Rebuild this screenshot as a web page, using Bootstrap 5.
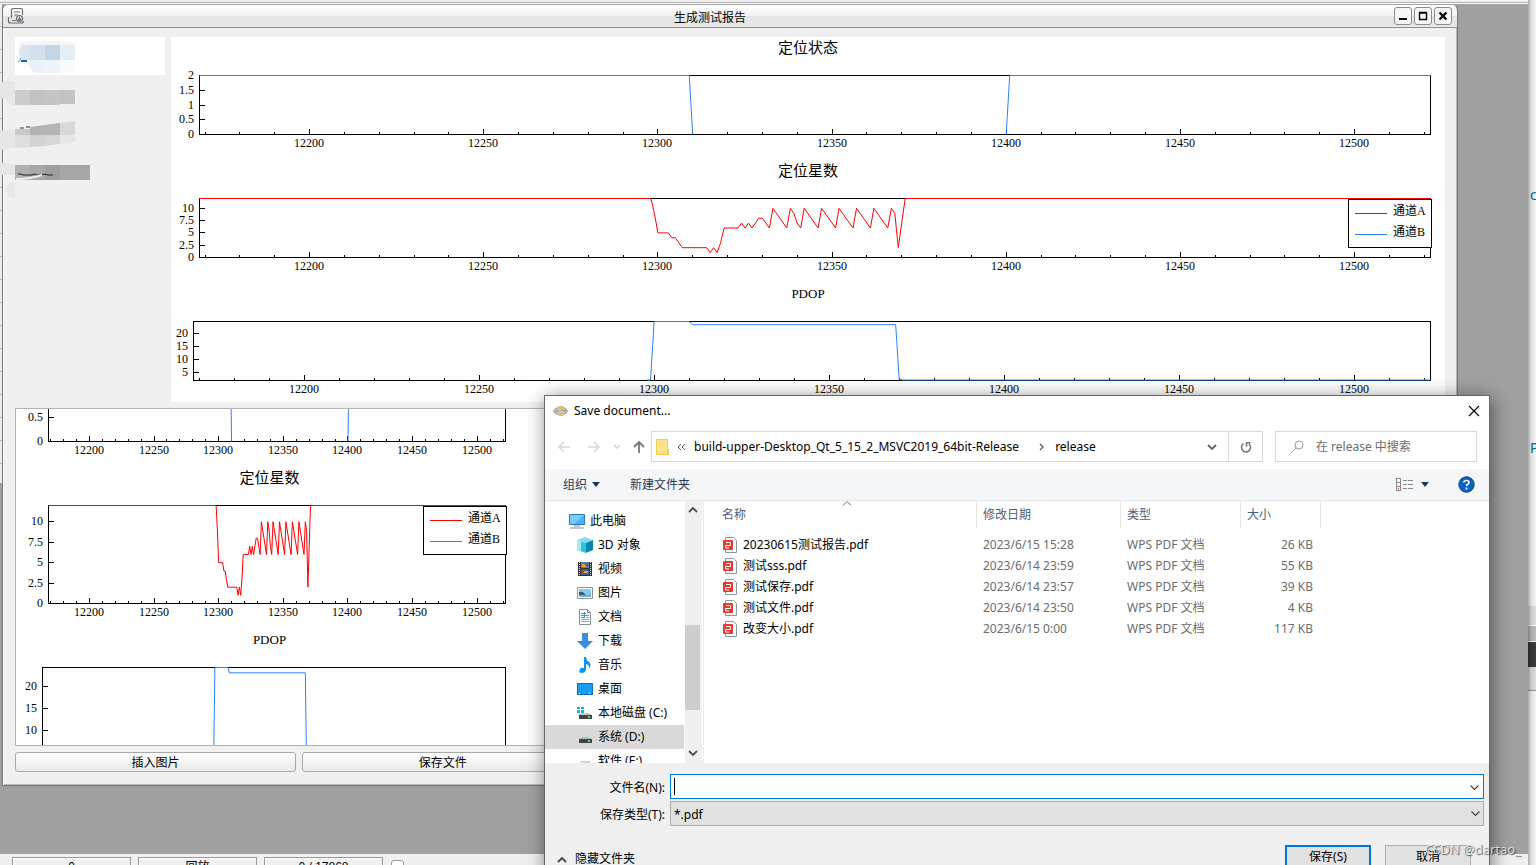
<!DOCTYPE html>
<html lang="zh-CN">
<head>
<meta charset="utf-8">
<meta name="viewport" content="width=device-width, initial-scale=1">
<title>生成测试报告</title>
<link href="https://cdn.jsdelivr.net/npm/bootstrap@5.3.0/dist/css/bootstrap.min.css" rel="stylesheet">
<style>
:root{--ui:"Noto Sans","Noto Sans CJK SC",sans-serif;--song:"Liberation Serif","Noto Sans CJK SC",serif}
body{font:12px/16px var(--ui);color:#000;background:#a0a0a0}
svg{display:block;flex:none}
button,input,select{font:inherit;color:inherit;padding:0;border-radius:0}
.top-strip{height:4px;background:linear-gradient(#efefef 2px,#b0b0b0 2px 3px,#fff 3px)}
.edge-left{width:2px;height:479px;background:repeating-linear-gradient(#ececec 0 22px,#b5b5b5 22px 23px)}
.edge-right{width:8px;background:#f6f6f6;color:#07728a;font-size:14px}
.edge-right::after{content:"";position:absolute;inset:0;background:linear-gradient(90deg,rgba(0,0,0,.32),rgba(0,0,0,.1) 3px,transparent)}
.edge-right .code,.edge-right .code2{left:2px}
.edge-right .code{top:187px}.edge-right .code2{top:440px}
.edge-right .blocks{top:606px;height:85px;background:linear-gradient(#dedede 19px,#fff 19px 20px,#bcbcbc 20px 35px,#fff 35px 36px,#3a3a3a 36px 61px,#dedede 61px 84px,#999 84px)}
.status-bar{height:11px;background:#f0f0f0;padding:3px 0 0 12px;gap:7px}
.status-bar button{width:119px;height:24px;border:1px solid #999;background:#f0f0f0;box-shadow:inset 1px 1px #fff;font:12px/16px "Liberation Sans","Noto Sans CJK SC",sans-serif;display:flex;justify-content:center;padding-top:1px}
.status-bar input{appearance:none;height:14px;background:linear-gradient(transparent 7px,#aaa 7px 8px,transparent 8px);margin:3px 0 0 1px}
.status-bar input::-webkit-slider-thumb{appearance:none;width:13px;height:14px;border:1px solid #999;border-radius:3px;background:#fff}

.main-win{left:2px;right:78px;top:0;bottom:68px;background:#f0f0f0;border:1px solid #777;border-top-color:#a5a5a5;border-radius:6px 6px 0 0;box-shadow:inset 1px 0 #fff,inset -1px -1px #bbb;font-family:var(--song)}
.win-title{height:23px;background:linear-gradient(#fff 0,#f3f3f3 48%,#e5e5e5 50%,#e8e8e8);border-bottom:1px solid #8e8e8e;border-radius:6px 6px 0 0;padding:0 5px 0 3px;font:12px/22px "Noto Sans CJK SC",sans-serif}
.win-title .caption{padding-top:2px}
.win-title .controls{gap:2px}
.win-title button{width:18px;height:18px;border:1px solid #8b8b8b;border-radius:3px;background:#f6f6f6;display:grid;place-items:center}
.win-body{padding:9px 12px 13px 12px;gap:6px;min-height:0}
.report-nav{width:150px}
.report-nav .list-group-item{height:38px;border:0;border-radius:0;background:transparent;padding:0}
.report-nav .list-group-item.active{background:#fff}
.plots{background:#fff;height:365px;min-width:0}
.preview{background:#fff;border:1px solid #b4b4b4;overflow:hidden;min-height:0}
.preview .paper{width:507px}
.plot-actions{display:grid;grid-template-columns:repeat(5,1fr);gap:6px}
.plot-actions button{height:20px;border:1px solid #a8a8a8;border-radius:3px;background:linear-gradient(#fefefe,#e9e9e9);line-height:16px;padding-top:2px}
.smudge{left:-3px;top:33px}
.plots svg,.paper svg{width:100%}
svg .ax{stroke:#000;fill:none;shape-rendering:crispEdges}
svg .box-fill{fill:#fff}
svg .tick-label{font:12px var(--song)}
svg .plot-title{font:15px var(--song)}
svg .plot-title.latin{font-size:13px}

.save-dlg{left:544px;right:46px;top:395px;bottom:-17px;background:#fff;border:1px solid #666;box-shadow:2px 3px 18px rgba(0,0,0,.5);z-index:5}
.dlg-title,.address-row,.cmd-bar,.dlg-foot{flex-shrink:0}
.dlg-title{height:30px;padding:0 9px 0 8px;gap:5px}
.address-row{height:43px;padding:5px 12px 7px 12px}
.address-row>div,.search-box{border:1px solid #d9d9d9}
.icon-btn{border:0;background:transparent;display:grid;place-items:center}
.address-row .icon-btn.go{width:16px}
.address-row .icon-btn.up{margin:0 6px 0 8px}
.search-box{width:202px;padding-left:14px;gap:12px;margin-left:12px}
.search-box input,.name-box input{border:0;outline:0;min-width:0;background:transparent}
.search-box input::placeholder{color:#6d6d6d;opacity:1}
.refresh{width:34px;border-left:1px solid #d9d9d9!important}
.crumb-sep{margin:0 9px 0 18px}
.cmd-bar{height:32px;background:#f5f6f7;border-bottom:1px solid #e6e6e8;padding:0 14px 0 18px;gap:29px;color:#1e395b}
.cmd-bar button{border:0;background:transparent}
.files{min-height:0}
.tree{width:139px;padding-top:8px;overflow:hidden}
.tree a{height:24px;gap:5px;padding-left:32px;color:#000;text-decoration:none;white-space:nowrap;flex:none}
.tree a.root{padding-left:24px}
.tree a.current{background:#d9d9d9}
.tree-scroll{width:17px;background:#f0f0f0;margin-left:1px}
.tree-scroll .track{height:100%;padding:5px 3px}
.tree-scroll .thumb{width:15px;height:85px;top:124px;left:0;background:#cdcdcd}
.listing{border-left:1px solid #ececec;margin-left:1px}
.file-table{table-layout:fixed;width:617px;margin:0;border-collapse:separate;border-spacing:0}
.file-table th{font-weight:400;color:#4c607a;height:27px;border-right:1px solid #e5e5e5;padding:0 6px;vertical-align:middle}
.file-table th:first-child{padding-left:18px}
.file-table td{height:21px;padding:0 6px;color:#6d6d6d;white-space:nowrap;vertical-align:middle}
.file-table td:first-child{color:#000;padding-left:18px}
.file-table td:last-child{text-align:right;padding-right:8px}
.file-table .file-name{gap:5px}
.file-table tbody::before{content:"";display:block;height:6px}
.sort{left:137px;top:0}
.dlg-foot{background:#f0f0f0;padding:11px 5px 12px 0}
.field-row{height:25px;margin-bottom:2px}
.field-row label{width:120px;text-align:right;margin-right:5px;padding-top:2px}
.name-box{border:1px solid #0078d7;background:#fff;padding:0 4px}
.caret{left:3px;top:3px;width:1px;height:17px;background:#000}
.type-box select{appearance:none;border:1px solid #adadad;background:#e1e1e1;padding:2px 3px 0;outline:0}
.drop{right:4px;top:10px;pointer-events:none}
.foot-actions{margin-top:19px;padding:0 13px 0 12px;gap:14px}
.foot-actions .choice{width:86px;height:24px;background:#e1e1e1;border:1px solid #adadad}
.foot-actions .choice.primary{border:2px solid #0078d7}
.watermark{right:15px;bottom:7px;font-size:13px;line-height:18px;color:rgba(235,235,235,.85);text-shadow:1px 1px 1px rgba(0,0,0,.6);z-index:9}
</style>
</head>
<body class="vh-100 overflow-hidden position-relative d-flex flex-column">
<div class="top-strip"></div>
<div class="flex-grow-1 position-relative">
  <div class="edge-left"></div>
  <main class="main-win position-absolute d-flex flex-column">
    <header class="win-title d-flex align-items-center">
      <svg width="20" height="20" fill="none" stroke="#6a6a78" stroke-width="1.200"><path d="M5.500 12V4q0-1.500 1.500-1.500h8q1.500 0 1.500 1.500v5M8 6h6M8 9h4M2.500 11v4q0 2 2 2h11q2 0 2-2"/><circle cx="13.500" cy="12.500" r="3"/><path d="M13.500 10.500v4m-1.500-1.500l1.500 1.500 1.500-1.500M6 14.500h4"/></svg>
      <span class="caption flex-grow-1 text-center">生成测试报告</span>
      <div class="controls d-flex">
        <button aria-label="最小化"><svg width="10" height="10"><path d="M1 8h8" stroke="#000" stroke-width="2"/></svg></button>
        <button aria-label="最大化"><svg width="10" height="10"><path d="M1.500 1.500h7v7h-7zM1 2h8" stroke="#000" fill="none" stroke-width="1.400"/></svg></button>
        <button aria-label="关闭"><svg width="10" height="10"><path d="M1.500 1.500l7 7m0-7l-7 7" stroke="#000" stroke-width="2.200"/></svg></button>
      </div>
    </header>
    <div class="win-body flex-grow-1 d-flex flex-column position-relative">
      <div class="d-flex" style="gap:6px">
        <nav class="report-nav list-group flex-shrink-0" aria-label="报告项目">
          <a href="#" class="list-group-item active" aria-label="项目一"><svg width="66" height="36">
            <path d="M3 25q2-1 3-4M8 22q1 3 4 3" stroke="#3b82b8" fill="none"/><path d="M4 8Q6 4 16 4H50L64 7H60V8z" fill="#f3f5f6"/>
            <path d="M15 8V23H8Q3 19 4 12L7 8z" fill="#d9e6f1"/><path d="M15 8h15v15H15z" fill="#d3e0ec"/><path d="M30 8h15v15H30z" fill="#c3d6e6"/><path d="M45 8h15v15H45z" fill="#e4eef7"/>
            <path d="M12 23h18v13H22Q14 35 12 23z" fill="#eaf2f9"/><path d="M30 23h15v13H30z" fill="#eef3f9"/><path d="M45 23h15v11l-15 2z" fill="#f8fbfd"/><path d="M6 24h6" stroke="#1c68a8" stroke-width="2"/></svg></a>
          <a href="#" class="list-group-item" aria-label="项目二"></a>
          <a href="#" class="list-group-item" aria-label="项目三"></a>
          <a href="#" class="list-group-item" aria-label="项目四"></a>
        </nav>
        <section class="plots flex-grow-1" id="plots"></section>
      </div>
      <section class="preview flex-grow-1" id="preview"><div class="paper" id="paper"></div></section>
      <div class="plot-actions"><button>插入图片</button><button>保存文件</button></div>
    </div>
    <svg class="smudge position-absolute" width="92" height="170">
      <g transform="translate(0,-38)">
      <path d="M0 84q6-6 15-2v24q-8-2-10-7l-5-1z" fill="#e6e6e6"/>
      <path d="M15 90h15v15H15z" fill="#cecccb"/><path d="M30 90h15v15H30z" fill="#c1c3c2"/><path d="M45 90h15v15H45z" fill="#c7c5c4"/><path d="M60 90h15v14H60z" fill="#c2c3c5"/>
      <path d="M20 128h4m2-1h4" stroke="#333"/>
      <path d="M0 131l15-2v19L0 150z" fill="#e6e6e6"/><path d="M15 129h15v6H15z" fill="#c9c9c9"/><path d="M30 127l15-2v10H30z" fill="#b3b3b3"/><path d="M45 125l15-2v12H45z" fill="#b5b4b3"/><path d="M60 123l15-2v14H60z" fill="#d7d8da"/>
      <path d="M15 135h15v12l-15 1z" fill="#dedede"/><path d="M30 135h15v11l-15 1z" fill="#d3d3d3"/><path d="M45 135h15v9l-15 2z" fill="#d7d7d5"/><path d="M60 135h15v7l-15 2z" fill="#e5e6e8"/>
      <path d="M0 163h8l7 2v10H0z" fill="#e6e6e6"/><path d="M15 165h15v15H15z" fill="#b0b0b0"/><path d="M30 165h15v15H30z" fill="#a8a8a8"/><path d="M45 165h15v15H45z" fill="#9f9f9f"/><path d="M60 165h30v15H60z" fill="#a5a6a7"/>
      <path d="M18 174h3l2 1h9l2-1 3 1h5l3-1 3 1h5" stroke="#222" fill="none"/><path d="M16 179q14 0 26-4" stroke="#eee" stroke-width="2" fill="none"/>
      <path d="M15 180v19q-9-3-10-10q2-7 10-9z" fill="#e8e8e8"/></g>
    </svg>
  </main>
</div>
<footer class="status-bar d-flex overflow-hidden">
  <button>0</button><button>回放</button><button>0 / 17868</button>
  <input type="range" class="flex-grow-1" value="0" aria-label="进度">
</footer>
<aside class="edge-right position-absolute top-0 end-0 h-100 overflow-hidden">
  <span class="code position-absolute">c</span><span class="code2 position-absolute">P</span>
  <div class="blocks position-absolute w-100"></div>
</aside>

<section class="save-dlg position-absolute d-flex flex-column" role="dialog" aria-labelledby="dlgTitle">
  <div class="dlg-title d-flex align-items-center">
    <svg width="16" height="16"><ellipse cx="7.500" cy="8" rx="7" ry="3.600" fill="#d9c6b0" stroke="#b98d72" stroke-width=".8"/><circle cx="8" cy="8" r="4.600" fill="#b9cbe4" stroke="#9b9a9a" stroke-width=".7"/><path d="M5 4l4-1 1 3-3 1zM6 11l4-1 1 2-3 1z" fill="#e8c440"/><path d="M8 7l5 1M2 9l4-2" stroke="#d28b36"/></svg>
    <span id="dlgTitle" class="flex-grow-1">Save document...</span>
    <button class="icon-btn" aria-label="关闭"><svg width="12" height="12"><path d="M1 1l10 10m0-10L1 11" stroke="#000" stroke-width="1.100"/></svg></button>
  </div>
  <div class="address-row d-flex">
    <button class="icon-btn" aria-label="后退"><svg width="14" height="12" fill="none" stroke="#d8d8d8" stroke-width="1.600"><path d="M13 6H2m5-5L2 6l5 5"/></svg></button>
    <button class="icon-btn ms-3" aria-label="前进"><svg width="14" height="12" fill="none" stroke="#d8d8d8" stroke-width="1.600"><path d="M1 6h11M7 1l5 5-5 5"/></svg></button>
    <button class="icon-btn go ms-2" aria-label="最近位置"><svg width="8" height="6" fill="none" stroke="#d0d0d0" stroke-width="1.400"><path d="M1 1l3 3 3-3"/></svg></button>
    <button class="icon-btn up" aria-label="上移"><svg width="12" height="14" fill="none" stroke="#777" stroke-width="1.800"><path d="M6 13V2M1 7l5-5 5 5"/></svg></button>
    <div class="d-flex flex-grow-1 align-items-stretch">
      <div class="d-flex align-items-center flex-grow-1 ps-1">
        <svg width="13" height="16"><path d="M0 0h12v10h1v6H0z" fill="#f2cc56"/><path d="M1 1h10v14H1z" fill="#ffe48c"/></svg>
        <svg class="ms-2" width="9" height="8" fill="none" stroke="#555"><path d="M4 1L1 4l3 3M8 1L5 4l3 3"/></svg>
        <span class="ms-2">build-upper-Desktop_Qt_5_15_2_MSVC2019_64bit-Release</span>
        <svg class="crumb-sep" width="9" height="8" fill="none" stroke="#666" stroke-width="1.400"><path d="M3 1l3 3-3 3"/></svg>
        <span>release</span>
      </div>
      <button class="icon-btn pe-2" aria-label="展开"><svg width="16" height="8" fill="none" stroke="#666" stroke-width="1.800"><path d="M4 2l4 4 4-4"/></svg></button>
      <button class="icon-btn refresh" aria-label="刷新"><svg width="12" height="12" fill="none" stroke="#777" stroke-width="1.600"><path d="M3.500 2.700a4.500 4.500 0 1 0 5.500.3M10.500 1.800h-4v4"/></svg></button>
    </div>
    <label class="search-box d-flex align-items-center">
      <svg width="14" height="14" fill="none" stroke="#999"><circle cx="9" cy="5" r="4"/><path d="M6 8l-5 5"/></svg>
      <input class="flex-grow-1" aria-label="搜索" placeholder="在 release 中搜索">
    </label>
  </div>
  <div class="cmd-bar d-flex align-items-center">
    <button class="d-flex align-items-center gap-1">组织<svg width="10" height="5"><path d="M1 0h8L5 5z" fill="#1e395b"/></svg></button>
    <button>新建文件夹</button>
    <button class="ms-auto d-flex align-items-center gap-2" aria-label="更改视图"><svg width="17" height="13" fill="none" stroke="#888" shape-rendering="crispEdges"><path d="M.5.500h4v12h-4zM0 4.500h4M0 8.500h4M7 2.500h4M12 2.500h5M7 6.500h4M12 6.500h5M7 10.500h4M12 10.500h5"/><path d="M2 10.500h1" stroke="#d33"/></svg><svg width="8" height="5"><path d="M0 0h8L4 5z" fill="#1e395b"/></svg></button>
    <button aria-label="帮助"><svg width="17" height="17"><circle cx="8.500" cy="8.500" r="7.700" fill="#0b62c4" stroke="#123f72"/><path d="M6 6.500Q6 4.500 8.500 4.500T11 6.500Q11 7.700 9.500 8.300 8.500 8.800 8.500 10M8.500 11.500v2" stroke="#fff" stroke-width="1.700" fill="none"/></svg></button>
  </div>
  <div class="files d-flex flex-grow-1">
    <nav class="tree d-flex flex-column" aria-label="文件夹">
      <a href="#" class="root d-flex align-items-center"><svg width="16" height="16"><path d="M.5 1.500h15v10H.5z" fill="#48b3f8" stroke="#2c7ab0"/><path d="M1 2h14L5 11H1z" fill="#77cbff"/><path d="M5 13h6M1 15h14" stroke="#7d93a5"/></svg>此电脑</a>
      <a href="#" class="d-flex align-items-center"><svg width="16" height="16"><path d="M0 3l8-3 8 3-7 3z" fill="#84dcea"/><path d="M0 3l9 3v10l-9-3z" fill="#30c1dc"/><path d="M0 3l4 1.300v10L0 13z" fill="#a4edf0"/><path d="M9 6l7-3v10l-7 3z" fill="#0788b0"/></svg>3D 对象</a>
      <a href="#" class="d-flex align-items-center"><svg width="16" height="16"><path d="M1 1h14v14H1z" fill="#333"/><path d="M4 1h8v6H4z" fill="#4f7fb9"/><path d="M4 8h8v6H4z" fill="#395c9d"/><path d="M5 3h4v3H5zM7 10h4v2H7z" fill="#e0af2f"/><path d="M8 2h3v3H8zM5 9h2v4H5z" fill="#b84431"/><path d="M2.500 1v14M13.500 1v14" stroke="#ddd" stroke-dasharray="1 1"/></svg>视频</a>
      <a href="#" class="d-flex align-items-center"><svg width="16" height="16"><path d="M.5 2.500h15v11H.5z" fill="#fff" stroke="#8d9499"/><path d="M2 4h12v8H2z" fill="#8bc9ee"/><path d="M2 7q4-1 6 2t6 0v3H2z" fill="#2d5e73"/><path d="M2 10h12v2H2z" fill="#6eb0d1"/></svg>图片</a>
      <a href="#" class="d-flex align-items-center"><svg width="16" height="16"><path d="M2.500.500h8l3 3v12h-11z" fill="#fff" stroke="#84909a"/><path d="M10.500.500v3h3" fill="none" stroke="#84909a"/><path d="M4 10.500h8M4 12.500h8M9 8.500h3" stroke="#9aa7b0"/><path d="M4 4.500h5M4 6.500h8M4 8.500h4M7.500 3v5" stroke="#2d9fd8"/></svg>文档</a>
      <a href="#" class="d-flex align-items-center"><svg width="16" height="16"><path d="M5 0h6v8h5l-8 8-8-8h5z" fill="#3b8ede"/></svg>下载</a>
      <a href="#" class="d-flex align-items-center"><svg width="16" height="16"><path d="M7 0h2q0 3 3 5 3 3 0 7 1-4-3-5v5q0 4-5 4-3-1-1-4 1-2 4-1z" fill="#0a94f0"/></svg>音乐</a>
      <a href="#" class="d-flex align-items-center"><svg width="16" height="16"><path d="M.5 2.500h15v11H.5z" fill="#169df9" stroke="#096db1"/><path d="M2 12.500h2M12 12.500h2" stroke="#fff" stroke-dasharray="1 1"/></svg>桌面</a>
      <a href="#" class="d-flex align-items-center"><svg width="16" height="16"><path d="M0 2h3v2H0zM4 2h3v2H4zM0 5h3v3H0zM4 5h3v3H4z" fill="#12b7e2"/><path d="M3 8h10l2 3H1z" fill="#ccc"/><path d="M2 10h13v4H2z" fill="#444"/><path d="M11 12h2" stroke="#35ef68" stroke-width="2"/></svg>本地磁盘 (C:)</a>
      <a href="#" class="current d-flex align-items-center"><svg width="16" height="16"><path d="M4 8h9l2 3H2z" fill="#bbb"/><path d="M2 10h13v4H2z" fill="#444"/><path d="M11 12h2" stroke="#35ef68" stroke-width="2"/></svg>系统 (D:)</a>
      <a href="#" class="d-flex align-items-center"><svg width="16" height="16"><path d="M4 8h9l2 4H2z" fill="#d2d5d8"/><path d="M2 12h13v3H2z" fill="#444"/></svg>软件 (E:)</a>
    </nav>
    <div class="tree-scroll position-relative"><div class="track d-flex flex-column justify-content-between">
      <svg width="10" height="8" fill="none" stroke="#505050" stroke-width="1.800"><path d="M1 6l4-4 4 4"/></svg><div class="thumb position-absolute"></div>
      <svg width="10" height="8" fill="none" stroke="#505050" stroke-width="1.800"><path d="M1 1l4 4 4-4"/></svg></div></div>
    <div class="listing flex-grow-1 position-relative">
      <svg class="sort position-absolute" width="12" height="5" fill="none" stroke="#666"><path d="M2 4.500l4-4 4 4"/></svg>
      <table class="file-table"><colgroup><col style="width:273px"><col style="width:144px"><col style="width:120px"><col style="width:80px"></colgroup>
        <thead><tr><th>名称</th><th>修改日期</th><th>类型</th><th>大小</th></tr></thead><tbody id="fileRows"></tbody></table>
    </div>
  </div>
  <div class="dlg-foot">
    <div class="field-row d-flex align-items-center"><label for="fileName">文件名(N):</label><div class="name-box flex-grow-1 h-100 position-relative"><input id="fileName" class="w-100 h-100"><span class="caret position-absolute"></span><svg class="drop position-absolute" width="9" height="6" fill="none" stroke="#444" stroke-width="1.200"><path d="M.5.500l4 4 4-4"/></svg></div></div>
    <div class="field-row d-flex align-items-center"><label for="fileType">保存类型(T):</label><div class="type-box flex-grow-1 h-100 position-relative"><select id="fileType" class="w-100 h-100"><option>*.pdf</option></select><svg class="drop position-absolute" width="9" height="6" fill="none" stroke="#444" stroke-width="1.200"><path d="M.5.500l4 4 4-4"/></svg></div></div>
    <div class="foot-actions d-flex">
      <button class="icon-btn d-flex align-items-center gap-2 me-auto pt-1"><svg width="10" height="7" fill="none" stroke="#444" stroke-width="1.800"><path d="M1 6l4-4 4 4"/></svg>隐藏文件夹</button>
      <button class="choice primary">保存(S)</button><button class="choice">取消</button>
    </div>
  </div>
</section>
<div class="watermark position-absolute">CSDN @dartao_</div>

<script src="https://cdn.jsdelivr.net/npm/bootstrap@5.3.0/dist/js/bootstrap.bundle.min.js"></script>
<script>
const files = [['20230615测试报告.pdf','2023/6/15 15:28','26 KB'],['测试sss.pdf','2023/6/14 23:59','55 KB'],['测试保存.pdf','2023/6/14 23:57','39 KB'],['测试文件.pdf','2023/6/14 23:50','4 KB'],['改变大小.pdf','2023/6/15 0:00','117 KB']];
const pdfIcon = '<svg width="16" height="16"><path d="M3.500.500h8l3 3v12h-11z" fill="#fff" stroke="#8c96a6"/><rect x="1" y="3" width="10" height="10" rx="1" fill="#e8392f"/><path d="M4 5.500h4.500v3H3.500V11H7" stroke="#fff" fill="none"/></svg>';
document.getElementById('fileRows').innerHTML = files.map(f =>
  `<tr><td><span class="file-name d-flex align-items-center">${pdfIcon}${f[0]}</span></td><td>${f[1]}</td><td>WPS PDF 文档</td><td>${f[2]}</td></tr>`).join('');

const X0 = 12168.4, X1 = 12521.8, BLUE = '#2f80ff', RED = '#f00';
const charts = [
  {title:'定位状态', min:0, max:2, ticks:[0,.5,1,1.5,2], inset:0, color:BLUE,
   data:[[X0,2],[12309,2],[12310,0],null,[12400,0],[12401,2],[X1,2]]},
  {title:'定位星数', min:0, max:12, ticks:[0,2.5,5,7.5,10], inset:0, color:RED, legend:true,
   data:[[X0,12],[12298,12],[12299,9],[12300,5],[12303,5],[12304,4],[12305,4],[12307,2],[12314,2],[12315,1],[12316,2],[12317,1],[12318,3],[12319,6],[12323,6],[12324,7],[12325,6],[12326,7],[12327,6],[12329,8],[12330,8],[12332,6],[12333,10],[12337,6],[12338,10],[12339,9],[12340,7],[12341,6],[12342,10],[12346,6],[12347,10],[12351,6],[12352,10],[12356,6],[12357,10],[12361,6],[12362,10],[12366,6],[12367,10],[12368,9],[12369,2],[12370,7],[12371,12],[X1,12]]},
  {title:'PDOP', min:2.1, max:24.4, ticks:[5,10,15,20], inset:6, color:BLUE,
   data:[[12298,2.3],[12299,2.3],[12300,24.4],[12310,24.4],[12311,23.2],[12369,23.2],[12370,2.6],[12371,2.3],[X1,2.3]]}
];

function drawChart(c, width, o) {
  const l = o.left - c.inset, r = width - o.right, t = 38, b = t + o.plot;
  const x = v => l + (v - X0) / (X1 - X0) * (r - l), y = v => b - (v - c.min) / (c.max - c.min) * (b - t);
  let s = `<svg height="${o.pitch}"><text class="plot-title${c.inset ? ' latin' : ''}" text-anchor="middle" x="${width / 2}" y="${c.inset ? 15 : 16}">${c.title}</text>`;
  let axis = `M${l}.5 ${t}.5H${r}.5V${b}.5H${l}.5z`;
  for (let v = 12170; v < X1; v += 10) {
    const p = Math.round(x(v)), major = v % 50 === 0;
    axis += `M${p}.5 ${b}v-${major ? 5 : 2}`;
    if (major) s += `<text class="tick-label" text-anchor="middle" x="${p}" y="${b + 13}">${v}</text>`;
  }
  for (const v of c.ticks) {
    const p = Math.round(y(v));
    axis += `M${l} ${p}.5h6`;
    s += `<text class="tick-label" text-anchor="end" x="${l - 5}" y="${p + 4}">${v}</text>`;
  }
  s += `<path class="ax" d="${axis}"/>`;
  let pen = 'M', d = '';
  for (const p of c.data) { if (!p) { pen = 'M'; continue; } d += `${pen}${(x(p[0]) + .5).toFixed(1)} ${(y(p[1]) + .5).toFixed(1)}`; pen = 'L'; }
  s += `<path d="${d}" fill="none" stroke="${c.color}"/>`;
  if (c.legend) {
    const a = r - 82;
    s += `<path class="ax box-fill" d="M${a}.5 ${t + 1}.5h83v48h-83z"/>` + [['通道A', RED], ['通道B', BLUE]].map((k, i) =>
      `<path d="M${a + 7} ${t + 15 + i * 21}.5h32" stroke="${k[1]}"/><text class="tick-label" x="${a + 45}" y="${t + 17 + i * 21}">${k[0]}</text>`).join('');
  }
  return s + '</svg>';
}
function render() {
  for (const [id, o] of [['plots', {left:28, right:15, plot:59, pitch:123}], ['paper', {left:32, right:18, plot:98, pitch:162}]]) {
    const host = document.getElementById(id);
    host.innerHTML = charts.map((c, i) => drawChart(c, host.clientWidth, i === 2 && id === 'plots' ? {...o, pitch:119} : o)).join('');
  }
  document.getElementById('preview').scrollTop = 104;
}
render();
addEventListener('resize', render);
</script>
</body>
</html>
